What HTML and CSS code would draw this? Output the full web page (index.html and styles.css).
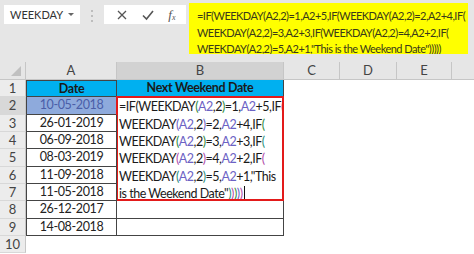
FILE: index.html
```html
<!DOCTYPE html>
<html>
<head>
<meta charset="utf-8">
<link rel="stylesheet" href="styles.css">
</head>
<body>
<div class="app">
  <div class="fbar">
    <div class="namebox"><span>WEEKDAY</span><span class="dd"></span></div>
    <div class="grip"><i></i><i></i><i></i></div>
    <div class="icons">
      <svg width="12" height="12" viewBox="0 0 12 12"><path d="M2 2 L10 10 M10 2 L2 10" stroke="#555" stroke-width="1.3" fill="none"/></svg>
      <svg width="14" height="12" viewBox="0 0 14 12"><path d="M2 6.5 L5.5 10 L12 2" stroke="#555" stroke-width="1.6" fill="none"/></svg>
      <span class="fx">f<sub>x</sub></span>
    </div>
    <div class="formula">=IF(WEEKDAY(A2,2)=1,A2+5,IF(WEEKDAY(A2,2)=2,A2+4,IF(<br>WEEKDAY(A2,2)=3,A2+3,IF(WEEKDAY(A2,2)=4,A2+2,IF(<br>WEEKDAY(A2,2)=5,A2+1,"This is the Weekend Date")))))</div>
  </div>
  <div class="sheet">
    <div class="corner"><span class="tri"></span></div>
    <div class="ch">A</div>
    <div class="ch sel">B</div>
    <div class="ch">C</div>
    <div class="ch">D</div>
    <div class="ch">E</div>
    <div class="ch last"></div>

    <div class="rh">1</div>
    <div class="c hd">Date</div>
    <div class="c hd">Next Weekend Date</div>
    <div class="blank"></div>

    <div class="rh rsel">2</div>
    <div class="c a2">10-05-2018</div>
    <div class="edit">
      <div>=IF(WEEKDAY<span class="p2">(</span><span class="r">A2</span>,2<span class="p2">)</span>=1,<span class="r">A2</span>+5,IF<span class="p3">(</span></div>
      <div>WEEKDAY<span class="p4">(</span><span class="r">A2</span>,2<span class="p4">)</span>=2,<span class="r">A2</span>+4,IF<span class="p2">(</span></div>
      <div>WEEKDAY<span class="p2">(</span><span class="r">A2</span>,2<span class="p2">)</span>=3,<span class="r">A2</span>+3,IF<span class="p5">(</span></div>
      <div>WEEKDAY<span class="p3">(</span><span class="r">A2</span>,2<span class="p3">)</span>=4,<span class="r">A2</span>+2,IF<span class="p3">(</span></div>
      <div>WEEKDAY<span class="p5">(</span><span class="r">A2</span>,2<span class="p5">)</span>=5,<span class="r">A2</span>+1,"This</div>
      <div>is the Weekend Date"<span class="p5">)</span><span class="p3">)</span><span class="p2">)</span><span class="p4">)</span><span class="p3">)</span><span class="caret"></span></div>
    </div>
    <div class="blank"></div>

    <div class="rh">3</div>
    <div class="c">26-01-2019</div>
    <div class="blank"></div>

    <div class="rh">4</div>
    <div class="c">06-09-2018</div>
    <div class="blank"></div>

    <div class="rh">5</div>
    <div class="c">08-03-2019</div>
    <div class="blank"></div>

    <div class="rh">6</div>
    <div class="c">11-09-2018</div>
    <div class="blank"></div>

    <div class="rh">7</div>
    <div class="c">11-05-2018</div>
    <div class="blank"></div>

    <div class="rh">8</div>
    <div class="c">26-12-2017</div>
    <div class="c"></div>
    <div class="blank"></div>

    <div class="rh">9</div>
    <div class="c">14-08-2018</div>
    <div class="c"></div>
    <div class="blank"></div>

    <div class="rh">10</div>
    <div class="e"></div>
    <div class="e"></div>
    <div class="blank"></div>
  </div>
</div>
</body>
</html>
```
FILE: styles.css
```css
* { box-sizing: border-box; }
html, body { margin: 0; padding: 0; background: #fff; }
body { width: 474px; height: 254px; overflow: hidden; font-family: Lato, "Open Sans", sans-serif; }
.app { width: 474px; height: 254px; display: flex; flex-direction: column; }

.fbar {
  background: #e6e6e6;
  height: 62px;
  display: flex;
  align-items: flex-start;
  padding: 3px 6px 0 4px;
}
.namebox {
  margin-top: 2px;
  width: 76px; height: 19px;
  background: #fff;
  display: flex; align-items: center; justify-content: space-between;
  padding: 0 6px 0 6px;
  font-size: 11px; color: #333;
}
.dd { width: 0; height: 0; border-left: 3px solid transparent; border-right: 3px solid transparent; border-top: 3px solid #666; }
.grip { margin-top: 7px; width: 24px; display: flex; flex-direction: column; align-items: center; gap: 3px; }
.grip i { width: 2px; height: 2px; background: #bdbdbd; display: block; }
.icons {
  margin-top: 2px;
  width: 82px; height: 19px;
  background: #fff;
  display: flex; align-items: center; justify-content: space-around;
  padding: 0 4px 0 6px;
}
.fx { font-family: "Liberation Serif", serif; font-style: italic; font-size: 13px; color: #555; line-height: 1; }
.fx sub { font-size: 8px; vertical-align: -1px; }
.formula {
  margin-left: 3px;
  flex: 1;
  height: 51px;
  background: #ffff00;
  padding: 5px 0 0 8px;
  font-size: 11px;
  letter-spacing: -0.52px;
  line-height: 16.5px;
  color: #3a3a1a;
  white-space: nowrap;
  overflow: hidden;
}

.sheet {
  display: grid;
  grid-template-columns: 26px 91px 167px 56px 57px 55px 22px;
  grid-template-rows: 18px repeat(9, 17.33px) 17.33px;
  font-size: 12.5px;
  letter-spacing: -0.36px;
}
.corner { background: #e6e6e6; border-right: 1px solid #c6c6c6; border-bottom: 1px solid #c6c6c6; position: relative; }
.tri { position: absolute; right: 4px; bottom: 3px; width: 0; height: 0; border-left: 10px solid transparent; border-bottom: 10px solid #c0c0c0; }
.ch { background: #e6e6e6; border-right: 1px solid #c6c6c6; border-bottom: 1px solid #c6c6c6; text-align: center; color: #444; line-height: 17px; font-size: 13px; letter-spacing: 0; }
.ch.sel { background: #d2d2d2; }
.ch.last { border-right: none; }
.rh { background: #ececec; border-right: 1px solid #c6c6c6; border-bottom: 1px solid #d8d8d8; text-align: center; color: #444; line-height: 17px; font-size: 13px; letter-spacing: 0; }
.rh.rsel { background: #d8d8d8; }
.blank { grid-column: 4 / 8; }
.c { border-right: 1px solid #444; border-bottom: 1px solid #444; text-align: center; color: #222; line-height: 16px; white-space: nowrap; }
.sheet > .c:nth-child(8), .sheet > .c:nth-child(9) { border-top: 1px solid #444; }
.c.hd { background: #00b0f0; font-weight: 700; color: #1a1a1a; line-height: 15px; }
.sheet > .rh + .c { border-left: 1px solid #444; }
.c.a2 { background: #8eaadc; color: #4a5ea8; border-left: 2px solid #1e6b52; }
.edit {
  grid-column: 3;
  grid-row: 3 / 9;
  border: 2px solid #e31a1a;
  margin: -1px 0 0 -1px;
  padding: 0 0 0 1px;
  color: #1a1a1a;
  white-space: nowrap;
  overflow: hidden;
  background: #fff;
  letter-spacing: -0.48px;
}
.edit div { height: 17.33px; line-height: 17px; }
.r { color: #6c62c4; }
.p2 { color: #2f8a3c; }
.p3 { color: #b04aa8; }
.p4 { color: #6c62c4; }
.p5 { color: #2a8f7a; }
.caret { display: inline-block; width: 1px; height: 15px; background: #111; vertical-align: -3px; margin-left: 1px; }
```
